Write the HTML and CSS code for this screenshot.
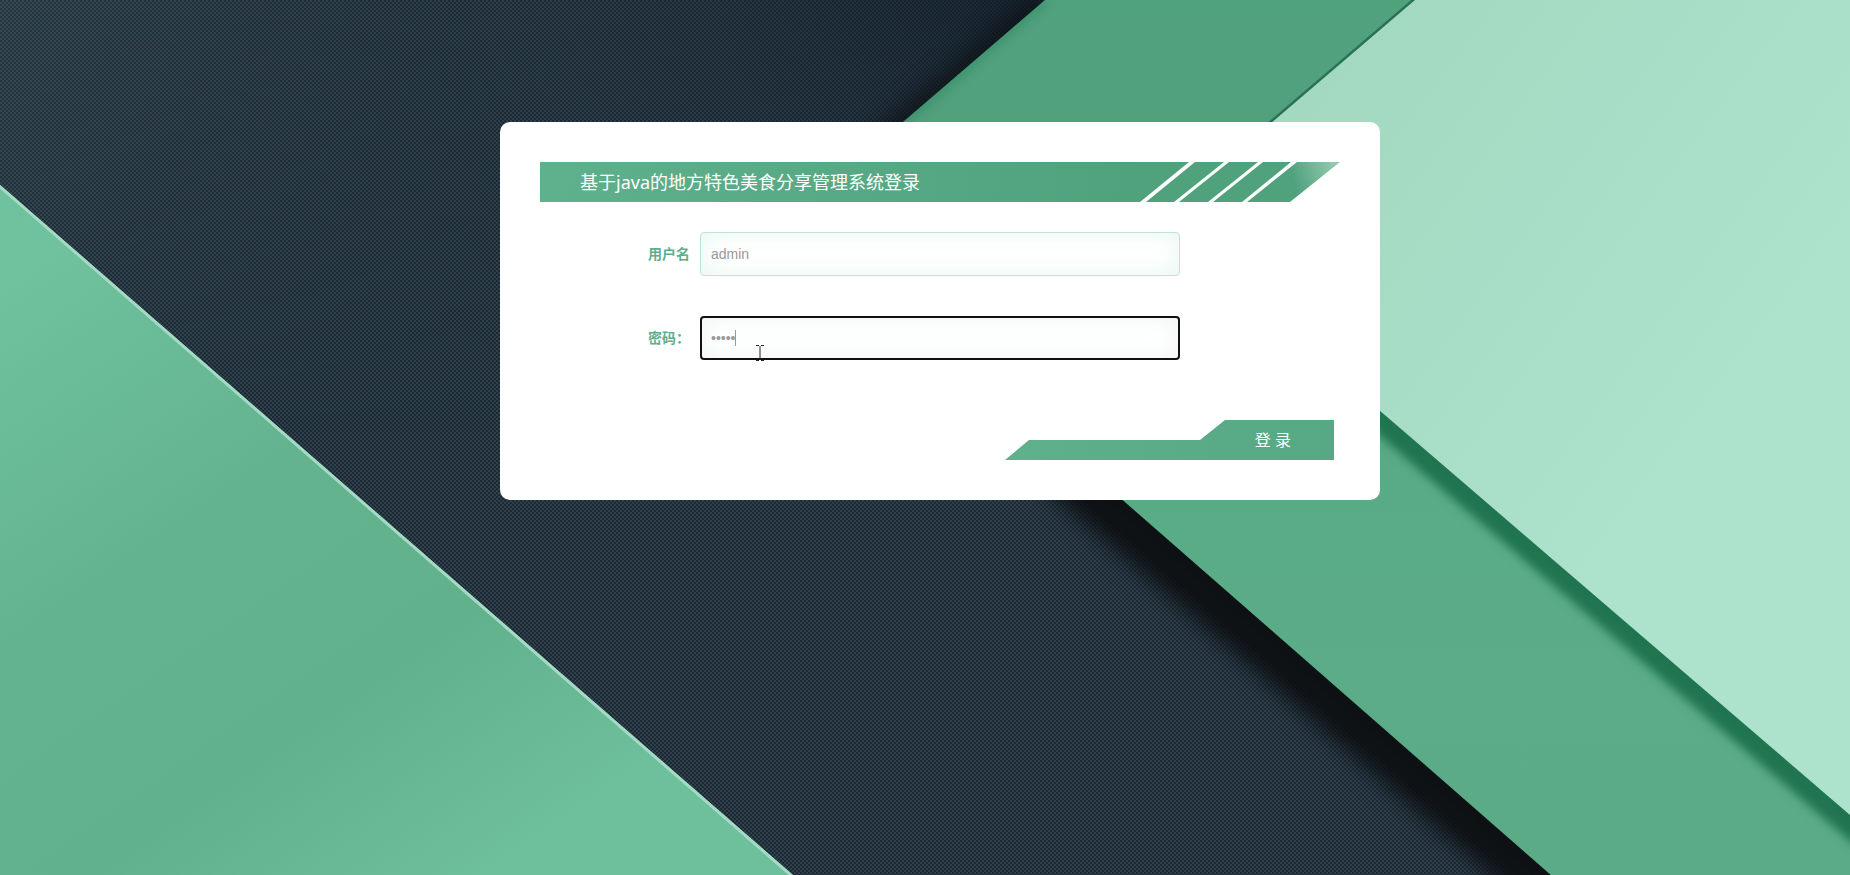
FILE: index.html
```html
<!DOCTYPE html>
<html lang="zh-CN">
<head>
<meta charset="utf-8">
<title>登录</title>
<link rel="stylesheet" href="styles.css">
</head>
<body>
<svg class="backdrop" viewBox="0 0 1850 875" preserveAspectRatio="xMidYMid slice" aria-hidden="true">
  <defs>
    <pattern id="weave" width="4" height="4" patternUnits="userSpaceOnUse">
      <rect width="4" height="4" fill="#2f404c"/>
      <rect width="2" height="2" fill="#1c2a34"/>
      <rect x="2" y="2" width="2" height="2" fill="#1c2a34"/>
    </pattern>
    <linearGradient id="shade" x1="0" y1="0" x2="1" y2="0">
      <stop offset="0" stop-color="#4a6068" stop-opacity=".25"/>
      <stop offset=".25" stop-color="#22303c" stop-opacity=".1"/>
      <stop offset=".55" stop-color="#0c1824" stop-opacity=".6"/>
    </linearGradient>
    <linearGradient id="fade" x1="0" y1="0" x2="0" y2="1">
      <stop offset="0" stop-color="#fff"/>
      <stop offset=".5" stop-color="#000"/>
    </linearGradient>
    <mask id="top"><rect width="1850" height="875" fill="url(#fade)"/></mask>
    <linearGradient id="left" gradientUnits="userSpaceOnUse" x1="60" y1="240" x2="500" y2="875">
      <stop offset="0" stop-color="#6fc29d"/>
      <stop offset=".4" stop-color="#63b38f"/>
      <stop offset=".7" stop-color="#61b18d"/>
      <stop offset="1" stop-color="#6ebf9b"/>
    </linearGradient>
    <linearGradient id="mid" gradientUnits="userSpaceOnUse" x1="1300" y1="0" x2="1300" y2="875">
      <stop offset="0" stop-color="#50a27d"/>
      <stop offset=".15" stop-color="#50a07c"/>
      <stop offset=".6" stop-color="#5aac87"/>
      <stop offset="1" stop-color="#5bab87"/>
    </linearGradient>
    <linearGradient id="light" gradientUnits="userSpaceOnUse" x1="1320" y1="100" x2="1750" y2="420">
      <stop offset="0" stop-color="#a3d9c1"/>
      <stop offset="1" stop-color="#ade2cc"/>
    </linearGradient>
    <clipPath id="midClip"><path d="M1045 0H1850V1137L796 214Z"/></clipPath>
    <filter id="soft" x="-10%" y="-10%" width="120%" height="120%" color-interpolation-filters="sRGB"><feGaussianBlur stdDeviation="11"/></filter>
    <filter id="fine" x="-10%" y="-10%" width="120%" height="120%" color-interpolation-filters="sRGB"><feGaussianBlur stdDeviation="5"/></filter>
  </defs>
  <rect width="1850" height="875" fill="url(#weave)"/>
  <rect width="1850" height="875" fill="url(#shade)" mask="url(#top)"/>
  <path d="M1045 0L796 214" stroke="#0e1114" stroke-width="24" opacity=".8" filter="url(#soft)"/>
  <path d="M796 214L1600 918L1540 918L1058 500L750 230Z" fill="#0e1114" filter="url(#soft)"/>
  <path d="M796 214L1600 918" stroke="#0e1114" stroke-width="30" filter="url(#fine)"/>
  <path d="M1045 0H1850V1137L796 214Z" fill="url(#mid)"/>
  <g clip-path="url(#midClip)">
    <path d="M1045 0L796 214" stroke="#2c8560" stroke-width="8" opacity=".6" filter="url(#fine)"/>
    <path d="M1158 220L1920 876" stroke="#207550" stroke-width="38" filter="url(#fine)"/>
  </g>
  <path d="M1415 0L1158 220" stroke="#2b7153" stroke-width="5"/>
  <path d="M1415 0H1850V815L1158 220Z" fill="url(#light)"/>
  <path d="M0 185L793 875H0Z" fill="url(#left)"/>
  <path d="M-2 185L793 877" stroke="#a5dac5" stroke-width="3"/>
</svg>

<main class="page">
  <form class="card">
    <header class="banner">
      <h1 class="title">基于java的地方特色美食分享管理系统登录</h1>
      <svg class="stripes" viewBox="0 0 200 40" aria-hidden="true">
        <defs>
          <linearGradient id="tip" gradientUnits="userSpaceOnUse" x1="153" y1="16" x2="194" y2="2">
            <stop offset="0" stop-color="#50a27d"/>
            <stop offset="1" stop-color="#90c9b0"/>
          </linearGradient>
        </defs>
        <path d="M0 0H49L0 40Z"/>
        <path d="M55 0H84L34 40H6Z"/>
        <path d="M89 0H118L68 40H39Z"/>
        <path d="M123 0H151L102 40H73Z"/>
        <path d="M157 0H200L150 40H107Z" fill="url(#tip)"/>
      </svg>
    </header>
    <div class="fields">
      <div class="field">
        <label class="label" for="user">用户名</label>
        <input class="input" id="user" type="text" value="admin">
      </div>
      <div class="field">
        <label class="label" for="pass">密码：</label>
        <input class="input input-active" id="pass" type="password" value="admin" autofocus>
        <span class="caret"></span>
        <svg class="pointer" viewBox="0 0 8 16" aria-hidden="true"><path d="M0 .5H3M5 .5H8M4 1V15M0 15.5H3M5 15.5H8"/></svg>
      </div>
    </div>
    <div class="actions">
      <button class="submit" type="submit"><span class="submit-text">登 录</span></button>
    </div>
  </form>
</main>
</body>
</html>
```
FILE: styles.css
```css
* {
  box-sizing: border-box;
}

body {
  margin: 0;
  min-height: 100vh;
  overflow: hidden;
  background: #25343f;
  font-family: "Noto Sans", "Noto Sans CJK SC", sans-serif;
}

.backdrop {
  position: fixed;
  inset: 0;
  z-index: -1;
  width: 100%;
  height: 100%;
}

.page {
  display: flex;
  justify-content: center;
  padding: 122px 0 40px 30px;
}

.card {
  width: 100%;
  max-width: 880px;
  padding: 40px;
  border-radius: 10px;
  background: #fff;
}

.banner {
  display: flex;
  height: 40px;
}

.title {
  flex: 1;
  margin: 0;
  padding-left: 40px;
  background: linear-gradient(100deg, #5fb08c, #50a27d);
  color: #fff;
  font-size: 18px;
  font-weight: 400;
  line-height: 40px;
  white-space: nowrap;
}

.stripes {
  width: 200px;
  height: 40px;
  fill: #50a27d;
}

.fields {
  display: flex;
  flex-direction: column;
  align-items: center;
  gap: 40px;
  padding: 30px 0 60px;
}

.field {
  position: relative;
  display: flex;
  align-items: center;
  width: 100%;
  max-width: 584px;
  padding-right: 52px;
}

.label {
  width: 52px;
  color: #5fae8d;
  font-size: 14px;
  font-weight: 700;
  line-height: 20px;
  white-space: nowrap;
}

.input {
  flex: 1;
  min-width: 0;
  height: 44px;
  padding: 0 10px;
  border: 1px solid #bfe3d6;
  border-radius: 4px;
  outline: 0;
  background: #fff;
  box-shadow: inset 0 0 24px #e6f7f2;
  color: #999;
  caret-color: transparent;
  font-family: "Liberation Sans", sans-serif;
  font-size: 14px;
}

.input-active {
  padding: 0 9px;
  border: 2px solid #101010;
  box-shadow: inset 0 0 24px #f1f5f5;
}

.caret {
  position: absolute;
  top: 14px;
  left: 87px;
  width: 1px;
  height: 16px;
  background: #999;
}

.pointer {
  position: absolute;
  top: 29px;
  left: 108px;
  width: 8px;
  height: 16px;
  fill: none;
  stroke: #222;
}

.actions {
  display: flex;
  justify-content: flex-end;
  padding-right: 6px;
}

.submit {
  width: 329px;
  height: 40px;
  padding: 0;
  border: 0;
  background: linear-gradient(90deg, #5fb08c, #56a984);
  clip-path: polygon(0 100%, 24px 20px, 195px 20px, 220px 0, 100% 0, 100% 100%);
  color: #fff;
  font: inherit;
  font-size: 16px;
  line-height: 40px;
  text-align: right;
}

.submit-text {
  padding-right: 43px;
}
```
